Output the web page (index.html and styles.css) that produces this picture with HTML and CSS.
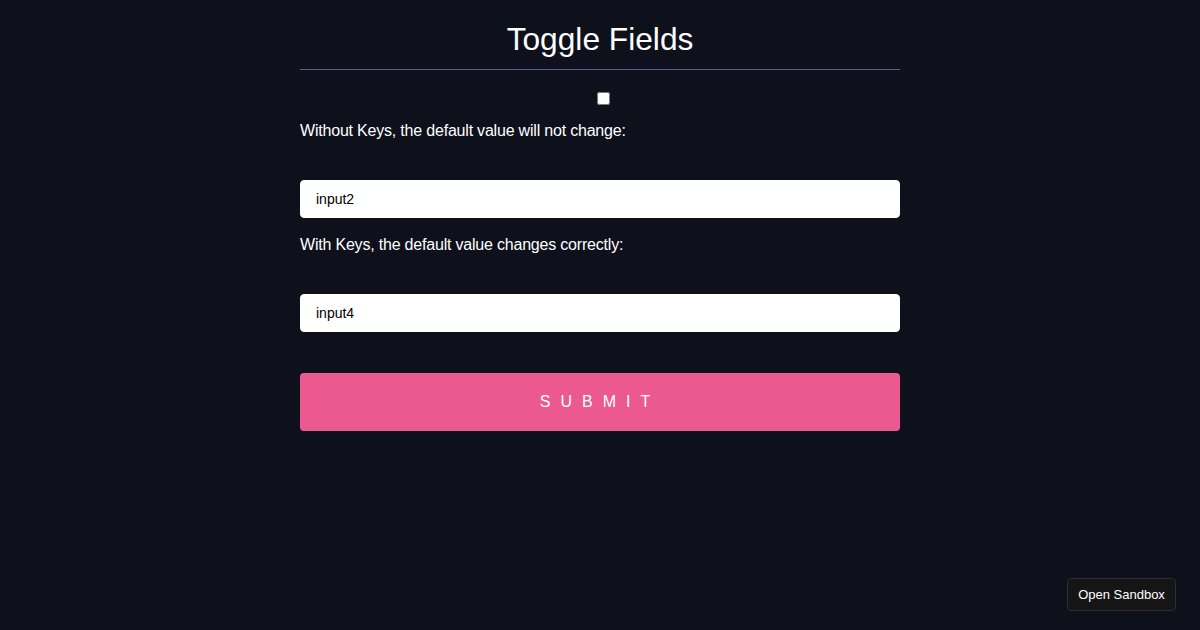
FILE: index.html
```html
<!DOCTYPE html>
<html lang="en">

<head>
    <meta charset="UTF-8">
    <meta name="viewport" content="width=device-width, initial-scale=1.0">
    <title>Toggle Fields</title>
    <link rel="stylesheet" href="styles.css">
</head>

<body>
    <div class="app">
        <h1>Toggle Fields</h1>
        <form id="toggle-form">
            <input type="checkbox" id="toggle" class="toggle">
            <label for="input2">Without Keys, the default value will not change:</label>
            <input type="text" id="input2" name="input2" value="input2" autocomplete="off">
            <label for="input4">With Keys, the default value changes correctly:</label>
            <input type="text" id="input4" name="input4" value="input4" autocomplete="off">
            <button type="submit">Submit</button>
        </form>
    </div>

    <button class="sandbox-button" type="button">Open Sandbox</button>
</body>

</html>
```

FILE: styles.css
```css
* {
    margin: 0;
    padding: 0;
    box-sizing: border-box;
    font-family: 'Liberation Sans', Arial, sans-serif;
}

body {
    background-color: #0e101c;
    min-height: 100vh;
}

.app {
    width: 600px;
    margin: 0 auto;
}

h1 {
    color: #ffffff;
    font-weight: 100;
    font-size: 31.7px;
    line-height: 36px;
    text-align: center;
    margin-top: 21px;
    padding-bottom: 12px;
    border-bottom: 1px solid rgb(79, 98, 148);
}

form {
    display: flex;
    flex-direction: column;
}

.toggle {
    width: 13px;
    height: 13px;
    margin: 22px 0 0 297px;
}

label {
    display: block;
    color: #ffffff;
    font-size: 16px;
    line-height: 20px;
    letter-spacing: -0.2px;
    margin: 16px 0 39px;
}

input[type="text"] {
    width: 100%;
    height: 38px;
    margin-bottom: 1px;
    padding: 10px 15px;
    border: 1px solid #ffffff;
    border-radius: 4px;
    background-color: #ffffff;
    color: #000000;
    font-size: 14px;
}

button[type="submit"] {
    height: 58px;
    margin-top: 40px;
    padding: 20px;
    border: none;
    border-radius: 4px;
    background-color: #ec5990;
    color: #ffffff;
    font-size: 16px;
    font-weight: 100;
    text-transform: uppercase;
    letter-spacing: 10px;
    cursor: pointer;
}

.sandbox-button {
    position: fixed;
    right: 24px;
    bottom: 19px;
    width: 109px;
    height: 33px;
    background-color: #151515;
    border: 1px solid #2e2e2e;
    border-radius: 4px;
    color: #ffffff;
    font-size: 13px;
    cursor: pointer;
}
```
